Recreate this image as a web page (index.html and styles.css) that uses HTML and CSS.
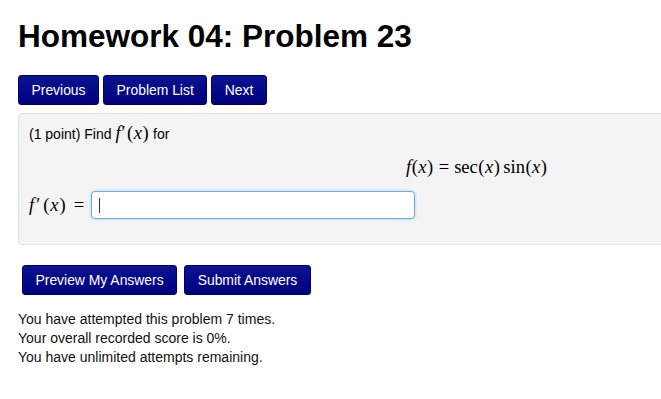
FILE: index.html
```html
<!DOCTYPE html>
<html>
<head>
<meta charset="utf-8">
<link rel="stylesheet" href="styles.css">
</head>
<body>
<h1 class="title">Homework 04: Problem 23</h1>
<div class="nav">
  <a class="btn">Previous</a>
  <a class="btn">Problem List</a>
  <a class="btn">Next</a>
</div>
<div class="problem">
  <div class="intro">(1 point) Find <span class="math"><i>f</i><span class="prime">′</span><span class="par">(</span><i>x</i><span class="par">)</span></span> for</div>
  <div class="display"><span class="math"><i>f</i><span class="par">(</span><i>x</i><span class="par">)</span><span class="eq">=</span>sec<span class="par">(</span><i>x</i><span class="par">)</span><span class="thin"></span>sin<span class="par">(</span><i>x</i><span class="par">)</span></span></div>
  <div class="answer">
    <span class="math label"><i>f</i><span class="prime">′</span><span class="par">(</span><i>x</i><span class="par">)</span><span class="eq">=</span></span>
    <div class="input"><span class="caret"></span></div>
  </div>
</div>
<div class="actions">
  <a class="btn">Preview My Answers</a>
  <a class="btn">Submit Answers</a>
</div>
<div class="status">
  <div>You have attempted this problem 7 times.</div>
  <div>Your overall recorded score is 0%.</div>
  <div>You have unlimited attempts remaining.</div>
</div>
</body>
</html>
```
FILE: styles.css
```css
html, body {
  overflow: hidden;
}
body {
  margin: 0;
  padding: 0 0 0 18px;
  font-family: "Liberation Sans", Arial, sans-serif;
  font-size: 14px;
  color: #000;
  background: #fff;
}
.title {
  margin: 0;
  padding-top: 17px;
  font-size: 31.5px;
  line-height: 38px;
  font-weight: bold;
}
.nav {
  display: flex;
  gap: 4px;
  margin-top: 20px;
}
.btn {
  display: inline-flex;
  align-items: center;
  height: 30px;
  box-sizing: border-box;
  padding: 0 12.5px;
  border: 1px solid #000066;
  border-radius: 3px;
  background: linear-gradient(#0a1490, #00007f);
  color: #fff;
  font-size: 13.9px;
  white-space: nowrap;
}
.problem {
  box-sizing: border-box;
  margin-top: 8px;
  padding: 9px 0 25px 10px;
  background: #f4f4f4;
  border: 1px solid #e2e2e2;
  border-right: none;
  border-radius: 4px 0 0 4px;
}
.intro {
  line-height: 20px;
}
.math {
  font-family: "Liberation Serif", "Times New Roman", serif;
  font-size: 18.5px;
  white-space: nowrap;
}
.math i {
  font-style: italic;
}
.prime {
  font-style: normal;
  margin-left: 1px;
  margin-right: 1px;
}
.par {
  font-style: normal;
  margin: 0 0.5px;
}
.eq {
  margin: 0 5px;
}
.thin {
  display: inline-block;
  width: 3px;
}
.display {
  line-height: 20px;
  margin-top: 13px;
  padding-left: 377px;
}
.answer {
  display: flex;
  align-items: center;
  gap: 7px;
  margin-top: 13px;
}
.label .prime {
  margin: 0 2px;
}
.label .par {
  margin: 0 1px;
}
.label .eq {
  margin: 0 0 0 7px;
}
.input {
  width: 324px;
  height: 28px;
  box-sizing: border-box;
  background: #fff;
  border: 1px solid #66afe9;
  border-radius: 4px;
  box-shadow: 0 0 3px rgba(102, 175, 233, 0.6);
  display: flex;
  align-items: center;
  padding-left: 7px;
}
.caret {
  width: 1px;
  height: 15px;
  background: #333;
}
.actions {
  display: flex;
  gap: 7px;
  margin-top: 20px;
  padding-left: 4px;
}
.status {
  margin-top: 15px;
  line-height: 19px;
  color: #111;
}
```
